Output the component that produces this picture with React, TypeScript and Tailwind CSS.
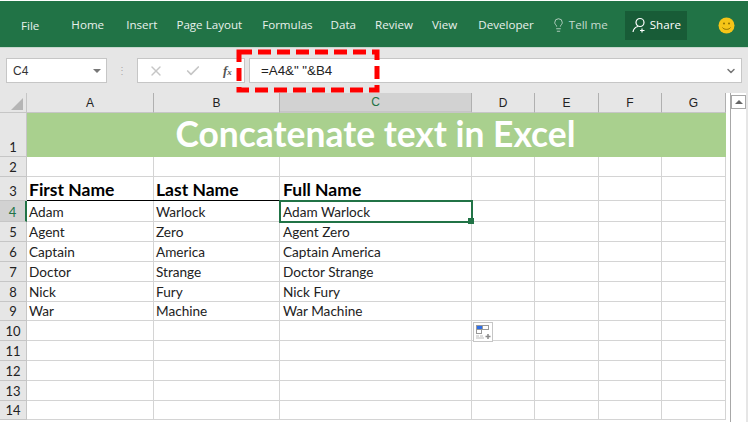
import { ChevronDown, Check, X, Lightbulb } from "lucide-react";

const colHeaders = [
  { name: "A", cls: "" },
  { name: "B", cls: "" },
  { name: "C", cls: "bg-[#d2d2d2] text-[#217346] border-b-2 border-b-[#217346]" },
  { name: "D", cls: "" },
  { name: "E", cls: "" },
  { name: "F", cls: "" },
  { name: "G", cls: "" },
];

const people = [
  ["Adam", "Warlock", "Adam Warlock"],
  ["Agent", "Zero", "Agent Zero"],
  ["Captain", "America", "Captain America"],
  ["Doctor", "Strange", "Doctor Strange"],
  ["Nick", "Fury", "Nick Fury"],
  ["War", "Machine", "War Machine"],
];

const tabs = [
  { label: "Home", cls: "ml-[32px]" },
  { label: "Insert", cls: "ml-[22px]" },
  { label: "Page Layout", cls: "ml-[19px]" },
  { label: "Formulas", cls: "ml-[20px]" },
  { label: "Data", cls: "ml-[18px]" },
  { label: "Review", cls: "ml-[19px]" },
  { label: "View", cls: "ml-[19px]" },
  { label: "Developer", cls: "ml-[21px]" },
];

const cols = "grid grid-cols-[27px_127px_126px_192px_63px_64px_63px_64px]";

function RowHead({ n, active }: { n: number; active?: boolean }) {
  return (
    <div
      className={`flex items-end justify-center border-r border-b border-[#c6c6c6] pb-[1px] text-[13px] leading-[16px] ${
        active ? "bg-[#d2d2d2] text-[#217346] border-r-2 border-r-[#217346]" : "bg-[#e6e6e6] text-[#222]"
      }`}
    >
      {n}
    </div>
  );
}

function Cell({ children, cls = "" }: { children?: React.ReactNode; cls?: string }) {
  return (
    <div className={`border-r border-b border-[#d4d4d4] pl-[2px] leading-[18px] text-[#222] flex items-end whitespace-nowrap ${cls}`}>
      {children}
    </div>
  );
}

function Row({ n, height, values, bold, active }: { n: number; height: string; values?: string[]; bold?: boolean; active?: boolean }) {
  const text = bold ? "text-[17.5px] font-bold text-black pb-[1px]" : "text-[13.6px]";
  return (
    <div className={`${cols} ${height}`}>
      <RowHead n={n} active={active} />
      <Cell cls={text}>{values?.[0]}</Cell>
      <Cell cls={text}>{values?.[1]}</Cell>
      <Cell cls={`${text} pl-[3px]`}>{values?.[2]}</Cell>
      <Cell />
      <Cell />
      <Cell />
      <Cell />
    </div>
  );
}

function PasteOptions() {
  return (
    <div className="absolute left-[473px] top-[322px] w-[20px] h-[20px] bg-white border border-[#c6c6c6]">
      <svg width="18" height="18" viewBox="0 0 18 18">
        <rect x="2.5" y="2.5" width="6" height="4" fill="#2f6fe8" stroke="#999" />
        <rect x="8.5" y="2.5" width="6" height="4" fill="#fff" stroke="#999" />
        <rect x="2.5" y="6.5" width="5" height="4" fill="#fff" stroke="#999" />
        <path d="M2 13h3M6 13h3M2 15h8" stroke="#bbb" />
        <path d="M14 11v5M11.5 13.5h5" stroke="#888" strokeWidth="1.5" />
      </svg>
    </div>
  );
}

export default function App() {
  return (
    <div className="relative w-[748px] h-[422px] overflow-hidden bg-white font-['Open_Sans','Noto_Sans',sans-serif]">
      {/* ribbon */}
      <div className="h-[48px] bg-[#217346] border-t border-t-white border-b border-b-[#c8d8ce] flex items-center pt-[2px] pl-[21px] text-[11.6px] text-[#e8f1ec] whitespace-nowrap">
        <span className="mt-[2px] shrink-0">File</span>
        {tabs.map((t) => (
          <span key={t.label} className={`shrink-0 ${t.cls}`}>{t.label}</span>
        ))}
        <Lightbulb className="ml-[17px] shrink-0 w-[15px] h-[16px] text-[#dfeae4]" strokeWidth={1.2} />
        <span className="ml-[3px] shrink-0 text-[#c7dbcf]">Tell me</span>
        <div className="ml-[17px] shrink-0 w-[62px] h-[29px] bg-[#185c37] flex items-center pl-[7px] text-white">
          <svg width="15" height="16" viewBox="0 0 15 16" fill="none" stroke="#fff" strokeWidth="1.2">
            <circle cx="8" cy="5.5" r="4" />
            <path d="M1 15c.5-3 2.5-5 5-5.5M10 11.5v4M8 13.5h4.500" />
          </svg>
          <span className="ml-[3px]">Share</span>
        </div>
        <svg className="ml-[31px] shrink-0" width="17" height="17" viewBox="0 0 17 17">
          <circle cx="8.500" cy="8.500" r="8" fill="#f5c518" />
          <circle cx="6" cy="6.500" r="1" fill="#8a6d00" />
          <circle cx="11" cy="6.500" r="1" fill="#8a6d00" />
          <path d="M4.500 10.500c1.500 2.500 6.500 2.500 8 0" stroke="#8a6d00" fill="none" />
        </svg>
      </div>

      {/* formula bar */}
      <div className="h-[45px] bg-[#e6e6e6] flex items-start pt-[10px] pl-[6px] font-['Liberation_Sans',sans-serif]">
        <div className="w-[101px] h-[25px] bg-white border border-[#c6c6c6] flex items-center justify-between pl-[6px] pr-[5px] text-[12px] text-[#333]">
          C4
          <span className="w-0 h-0 border-x-[4px] border-x-transparent border-t-[4px] border-t-[#777]" />
        </div>
        <div className="w-[30px] h-[25px] flex items-center justify-center text-[#aaa] text-[10px] leading-none">⋮</div>
        <div className="w-[108px] h-[25px] bg-white border border-[#c6c6c6] flex items-center text-[#c6c6c6]">
          <X className="ml-[10px] w-[16px] h-[16px]" strokeWidth={2} />
          <Check className="ml-[21px] w-[16px] h-[16px]" strokeWidth={2.5} />
          <span className="ml-[22px] font-['Liberation_Serif',serif] italic font-bold text-[13px] leading-none text-[#555]">
            f<span className="text-[9px]">x</span>
          </span>
        </div>
        <div className="ml-[4px] w-[493px] h-[25px] bg-white border border-[#c6c6c6] flex items-center justify-between pl-[11px] pr-[4px] text-[13.3px] text-[#222]">
          {'=A4&" "&B4'}
          <ChevronDown className="w-[12px] h-[12px] text-[#777]" strokeWidth={3} />
        </div>
      </div>

      {/* sheet */}
      <div className="flex">
        <div className="w-[730px] font-['Lato',sans-serif]">
          <div className={`${cols} h-[20px] font-['Liberation_Sans',sans-serif]`}>
            <div className="bg-[#e6e6e6] border-r border-b border-[#c6c6c6] relative overflow-hidden">
              <span className="absolute right-[3px] bottom-[2px] w-0 h-0 border-l-[12px] border-l-transparent border-b-[12px] border-b-[#b5b5b5]" />
            </div>
            {colHeaders.map((c) => (
              <div
                key={c.name}
                className={`flex items-center justify-center text-[12px] border-r border-r-[#b0b0b0] border-b border-b-[#c6c6c6] ${c.cls || "bg-[#e6e6e6] text-[#222]"}`}
              >
                {c.name}
              </div>
            ))}
          </div>

          <div className={`${cols} h-[44px]`}>
            <RowHead n={1} />
            <div className="col-span-7 bg-[#a9d08e] flex items-center justify-center pb-[2px] pr-[2px] text-white font-bold text-[35.4px] leading-none whitespace-nowrap">
              Concatenate text in Excel
            </div>
          </div>
          <Row n={2} height="h-[20px]" />
          <Row n={3} height="h-[24px]" values={["First Name", "Last Name", "Full Name"]} bold />
          <Row n={4} height="h-[21px]" values={people[0]} active />
          <Row n={5} height="h-[20px]" values={people[1]} />
          <Row n={6} height="h-[20px]" values={people[2]} />
          <Row n={7} height="h-[20px]" values={people[3]} />
          <Row n={8} height="h-[20px]" values={people[4]} />
          <Row n={9} height="h-[19px]" values={people[5]} />
          <Row n={10} height="h-[20px]" />
          <Row n={11} height="h-[20px]" />
          <Row n={12} height="h-[20px]" />
          <Row n={13} height="h-[20px]" />
          <Row n={14} height="h-[19px]" />
        </div>

        {/* scrollbar */}
        <div className="w-[18px] h-[330px] bg-[#e6e6e6] border-l border-[#a8a8a8] flex flex-col">
          <div className="w-[15px] flex-1 bg-white">
            <div className="mt-[2px] h-[14px] border border-[#a8a8a8] flex items-center justify-center">
              <span className="w-0 h-0 border-x-[4px] border-x-transparent border-b-[4px] border-b-[#666]" />
            </div>
          </div>
        </div>
      </div>

      {/* selected cell */}
      <div className="absolute left-[279px] top-[200px] w-[194px] h-[23px] border-2 border-[#217346]" />
      <div className="absolute left-[468px] top-[218px] w-[6px] h-[6px] bg-[#217346]" />
      <div className="absolute left-[27px] top-[200px] w-[252px] h-[1px] bg-black" />

      <PasteOptions />

      {/* red callout */}
      <svg className="absolute left-[234px] top-[47px]" width="148" height="47" viewBox="0 0 148 47" fill="none">
        <rect x="5" y="5" width="138" height="38" stroke="#ff0000" strokeWidth="5" strokeDasharray="13 6" />
      </svg>
    </div>
  );
}
